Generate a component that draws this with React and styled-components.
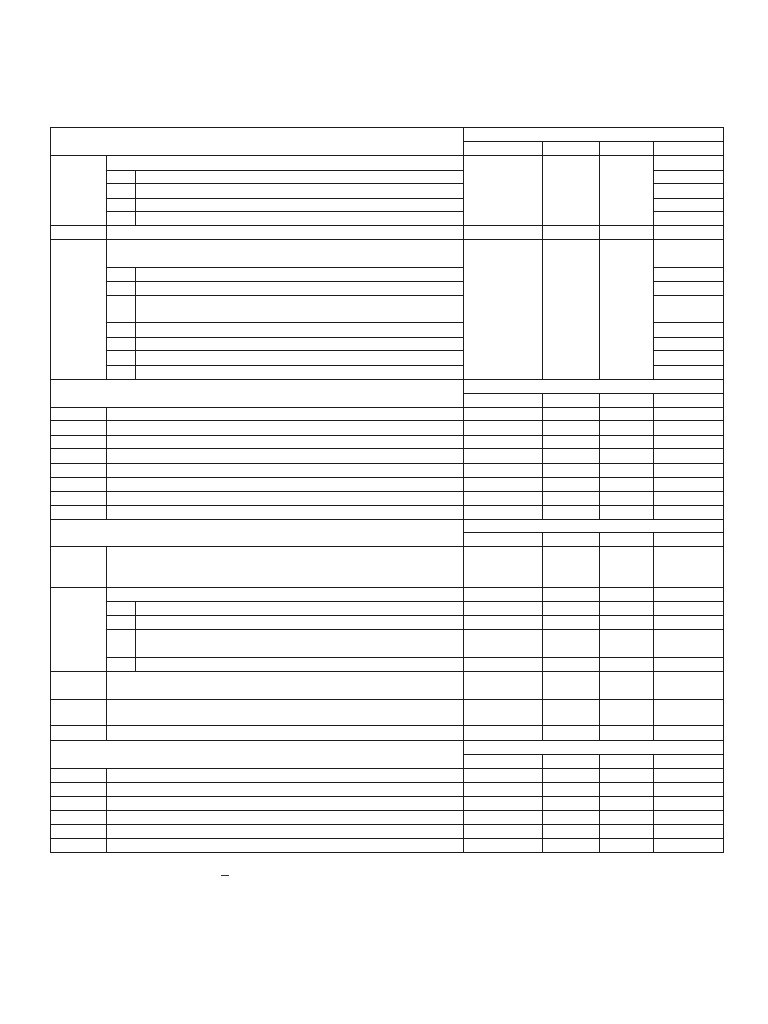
import React from 'react';
import styled, { createGlobalStyle } from 'styled-components';

// row heights in px, measured from the form
const rowHeights = [
  14, 14, 15, 13, 15, 13, 14, 14, 28, 14, 14, 27, 15, 13, 15, 14, 14, 14, 13, 15, 13, 15, 14,
  14, 14, 14, 13, 14, 41, 14, 14, 14, 28, 14, 28, 26, 15, 14, 14, 14, 14, 14, 14, 14, 14,
];

// [colSpan, rowSpan]
const head = [[[3, 2], [4, 1]], [[1], [1], [1], [1]]];
const plainRow = [[1], [2], [1], [1], [1], [1]];
const repeat = (row, n) => Array.from({ length: n }, () => row);

const groupA = [
  [[1, 5], [2], [1, 5], [1, 5], [1, 5], [1]],
  ...repeat([[1], [1], [1]], 4),
];

const groupB = [
  [[1, 8], [2], [1, 8], [1, 8], [1, 8], [1]],
  ...repeat([[1], [1], [1]], 7),
];

const groupC = [
  [[1, 5], [2], [1], [1], [1], [1]],
  ...repeat([[1], [1], [1], [1], [1], [1]], 4),
];

const layout = [
  ...head,
  ...groupA,
  plainRow,
  ...groupB,
  ...head,
  ...repeat(plainRow, 8),
  ...head,
  plainRow,
  ...groupC,
  ...repeat(plainRow, 3),
  ...head,
  ...repeat(plainRow, 6),
];

const App = () => {
  return (
    <Page>
      <GlobalStyle />
      <FormGrid $rows={rowHeights.map((h) => `${h}px`).join(' ')}>
        {layout.map((row, i) =>
          row.map(([c, r = 1], j) => <Cell key={`${i}-${j}`} $c={c} $r={r} />)
        )}
      </FormGrid>
      <Note>
        <Dash />
      </Note>
    </Page>
  );
};

export default App;

const GlobalStyle = createGlobalStyle`
  html, body {
    margin: 0;
    background: #fff;
    font-family: "Liberation Sans", Arial, sans-serif;
  }
`;

const Page = styled.div`
  width: 768px;
  min-height: 1024px;
  box-sizing: border-box;
  padding: 127px 0 0 50px;
`;

const FormGrid = styled.div`
  display: grid;
  grid-template-columns: 56px 29px 328px 79px 57px 54px 70px;
  grid-template-rows: ${(p) => p.$rows};
  width: max-content;
  border-top: 1px solid #1c1c1c;
  border-left: 1px solid #1c1c1c;
`;

const Cell = styled.div`
  grid-column: span ${(p) => p.$c};
  grid-row: span ${(p) => p.$r};
  box-sizing: border-box;
  border-right: 1px solid #1c1c1c;
  border-bottom: 1px solid #1c1c1c;
  background: #fff;
`;

const Note = styled.div`
  display: flex;
  padding: 22px 0 0 171px;
`;

const Dash = styled.span`
  width: 8px;
  height: 1px;
  background: #333;
`;
